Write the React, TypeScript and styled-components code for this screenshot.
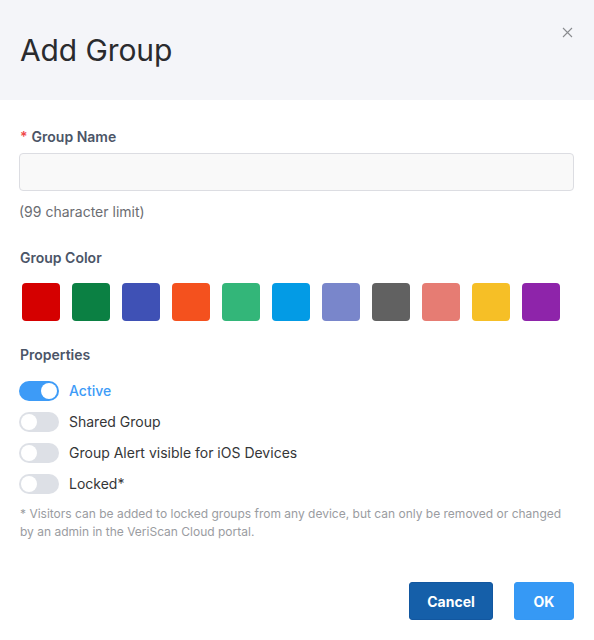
import React, { useState } from "react";
import styled, { createGlobalStyle } from "styled-components";

const GlobalStyle = createGlobalStyle`
  html, body {
    margin: 0;
    padding: 0;
    background: #ffffff;
  }
  body {
    font-family: Inter, "Noto Sans", "Liberation Sans", sans-serif;
    -webkit-font-smoothing: antialiased;
  }
  * {
    box-sizing: border-box;
  }
`;

const Modal = styled.div`
  position: relative;
  width: 594px;
  height: 640px;
  background: #ffffff;
  display: flex;
  flex-direction: column;
`;

const Header = styled.div`
  height: 100px;
  background: #f4f5f9;
  display: flex;
  align-items: center;
  padding: 0 20px;
`;

const Title = styled.h1`
  margin: 0;
  font-size: 30px;
  font-weight: 400;
  color: #2a2b2e;
  letter-spacing: -0.1px;
`;

const CloseButton = styled.button`
  position: absolute;
  top: 22px;
  right: 17px;
  width: 20px;
  height: 20px;
  padding: 0;
  border: 0;
  background: transparent;
  display: flex;
  align-items: center;
  justify-content: center;
  cursor: pointer;
`;

const Body = styled.div`
  flex: 1;
  padding: 27px 20px 0 19px;
  display: flex;
  flex-direction: column;
`;

const Label = styled.div<{ $gap?: number }>`
  font-size: 14px;
  line-height: 20px;
  font-weight: 600;
  color: #4b5567;
  padding-left: 1px;
  margin-bottom: ${(p) => p.$gap ?? 6}px;
`;

const Required = styled.span`
  color: #f0484a;
  margin-right: 4px;
`;

const TextInput = styled.input`
  width: 100%;
  height: 38px;
  border: 1px solid #dcdde2;
  border-radius: 4px;
  background: #f9f9f9;
  padding: 0 10px;
  font: inherit;
  font-size: 14px;
  outline: none;
`;

const Hint = styled.div`
  margin-top: 12px;
  font-size: 14px;
  line-height: 18px;
  color: #6b6d72;
`;

const Section = styled.div<{ $top: number }>`
  margin-top: ${(p) => p.$top}px;
`;

const Swatches = styled.div`
  display: flex;
  gap: 12px;
  padding-left: 3px;
`;

const Swatch = styled.button<{ $color: string }>`
  width: 38px;
  height: 38px;
  border: 0;
  padding: 0;
  border-radius: 4px;
  background: ${(p) => p.$color};
  cursor: pointer;
`;

const ToggleList = styled.div`
  display: flex;
  flex-direction: column;
  gap: 11px;
`;

const ToggleRow = styled.label`
  display: flex;
  align-items: center;
  gap: 10px;
  cursor: pointer;
`;

const Track = styled.span<{ $on: boolean }>`
  position: relative;
  width: 40px;
  height: 20px;
  border-radius: 10px;
  background: ${(p) => (p.$on ? "#3d9bf7" : "#dde0e6")};
  flex-shrink: 0;
`;

const Knob = styled.span<{ $on: boolean }>`
  position: absolute;
  top: 2px;
  left: ${(p) => (p.$on ? "22px" : "2px")};
  width: 16px;
  height: 16px;
  border-radius: 50%;
  background: #ffffff;
`;

const ToggleText = styled.span<{ $on: boolean }>`
  font-size: 14px;
  line-height: 20px;
  font-weight: ${(p) => (p.$on ? 500 : 400)};
  color: ${(p) => (p.$on ? "#3d9bf7" : "#353638")};
`;

const Footnote = styled.p`
  margin: 11px 0 0;
  padding-left: 1px;
  font-size: 12px;
  line-height: 18px;
  color: #9a9ca1;
`;

const Footer = styled.div`
  display: flex;
  justify-content: flex-end;
  gap: 21px;
  padding: 0 20px 20px;
`;

const Button = styled.button<{ $variant: "primary" | "secondary" }>`
  height: 38px;
  width: ${(p) => (p.$variant === "secondary" ? 84 : 60)}px;
  padding: 0;
  border-radius: 3px;
  border: 1px solid
    ${(p) => (p.$variant === "secondary" ? "#1257a0" : "#3598f4")};
  background: ${(p) => (p.$variant === "secondary" ? "#155fa9" : "#3699f5")};
  color: #ffffff;
  font-family: inherit;
  font-size: 14px;
  font-weight: 700;
  cursor: pointer;
`;

const colors = [
  "#d50000",
  "#0b8043",
  "#3f51b5",
  "#f4511e",
  "#33b679",
  "#039be5",
  "#7986cb",
  "#616161",
  "#e67c73",
  "#f6bf26",
  "#8e24aa",
];

const initialProps = [
  { key: "active", label: "Active", on: true },
  { key: "shared", label: "Shared Group", on: false },
  { key: "ios", label: "Group Alert visible for iOS Devices", on: false },
  { key: "locked", label: "Locked*", on: false },
];

export default function App() {
  const [name, setName] = useState("");
  const [props, setProps] = useState(initialProps);

  const toggle = (key: string) => {
    setProps(props.map((p) => (p.key === key ? { ...p, on: !p.on } : p)));
  };

  return (
    <>
      <GlobalStyle />
      <Modal>
        <Header>
          <Title>Add Group</Title>
        </Header>
        <CloseButton aria-label="Close">
          <svg width="11" height="11" viewBox="0 0 11 11">
            <path
              d="M1 1 L10 10 M10 1 L1 10"
              stroke="#8a8c90"
              strokeWidth="1.1"
              fill="none"
            />
          </svg>
        </CloseButton>
        <Body>
          <Label>
            <Required>*</Required>Group Name
          </Label>
          <TextInput
            value={name}
            maxLength={99}
            onChange={(e) => setName(e.target.value)}
          />
          <Hint>(99 character limit)</Hint>

          <Section $top={27}>
            <Label $gap={15}>Group Color</Label>
            <Swatches>
              {colors.map((c) => (
                <Swatch key={c} $color={c} aria-label={c} />
              ))}
            </Swatches>
          </Section>

          <Section $top={24}>
            <Label $gap={16}>Properties</Label>
            <ToggleList>
              {props.map((p) => (
                <ToggleRow key={p.key} onClick={() => toggle(p.key)}>
                  <Track $on={p.on}>
                    <Knob $on={p.on} />
                  </Track>
                  <ToggleText $on={p.on}>{p.label}</ToggleText>
                </ToggleRow>
              ))}
            </ToggleList>
          </Section>
          <Footnote>
            * Visitors can be added to locked groups from any device, but can
            only be removed or changed by an admin in the VeriScan Cloud portal.
          </Footnote>
        </Body>
        <Footer>
          <Button $variant="secondary">Cancel</Button>
          <Button $variant="primary">OK</Button>
        </Footer>
      </Modal>
    </>
  );
}
